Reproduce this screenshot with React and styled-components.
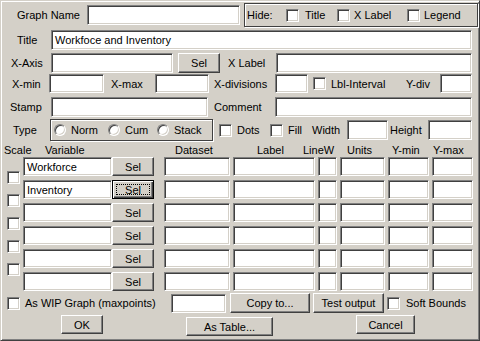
import React from 'react';
import styled, { createGlobalStyle } from 'styled-components';

const GlobalStyle = createGlobalStyle`
    html, body {
        margin: 0;
        padding: 0;
        background: #d4d0c8;
    }
`;

const Window = styled.div`
    width: 480px;
    height: 341px;
    box-sizing: border-box;
    background: #d4d0c8;
    border: 1px solid;
    border-color: #d4d0c8 #404040 #404040 #d4d0c8;
    box-shadow: inset 1px 1px #fff, inset -1px -1px #808080;
    font-family: "Liberation Sans", Arial, sans-serif;
    font-size: 11px;
    color: #000;
    display: flex;
    flex-direction: column;
    overflow: hidden;
`;

const Row = styled.div`
    display: flex;
    align-items: ${(p) => p.$align || 'center'};
    height: ${(p) => p.$h}px;
    margin-top: ${(p) => p.$mt || 0}px;
    flex-shrink: 0;
`;

const Text = styled.span`
    margin-left: ${(p) => p.$ml || 0}px;
    width: ${(p) => (p.$w ? `${p.$w}px` : 'auto')};
    flex-shrink: 0;
    white-space: nowrap;
`;

const Field = styled.div`
    box-sizing: border-box;
    width: ${(p) => p.$w}px;
    height: ${(p) => p.$h || 20}px;
    margin-left: ${(p) => p.$ml || 0}px;
    flex-shrink: 0;
    background: #fff;
    border: 1px solid;
    border-color: #808080 #fff #fff #808080;
    box-shadow: inset 1px 1px #404040, inset -1px -1px #d4d0c8;
    padding-left: 3px;
    display: flex;
    align-items: center;
    white-space: nowrap;
    overflow: hidden;
`;

const Button = styled.div`
    box-sizing: border-box;
    width: ${(p) => p.$w}px;
    height: ${(p) => p.$h || 20}px;
    margin-left: ${(p) => p.$ml || 0}px;
    margin-top: ${(p) => p.$mt || 0}px;
    flex-shrink: 0;
    background: #d4d0c8;
    border: 1px solid;
    border-color: ${(p) => (p.$default ? '#000' : '#fff #404040 #404040 #fff')};
    box-shadow: ${(p) =>
        p.$default
            ? 'inset 1px 1px #fff, inset -1px -1px #404040, inset -2px -2px #808080'
            : 'inset -1px -1px #808080'};
    padding: ${(p) => (p.$default ? '3px' : '0')};
    display: flex;
    align-items: center;
    justify-content: center;
    white-space: nowrap;
`;

const Focus = styled.span`
    flex: 1;
    align-self: stretch;
    border: 1px dotted #000;
    display: flex;
    align-items: center;
    justify-content: center;
`;

const Check = styled.span`
    box-sizing: border-box;
    width: 13px;
    height: 13px;
    flex-shrink: 0;
    background: #fff;
    border: 1px solid;
    border-color: #808080 #fff #fff #808080;
    box-shadow: inset 1px 1px #404040, inset -1px -1px #d4d0c8;
`;

const Radio = styled.span`
    box-sizing: border-box;
    width: 12px;
    height: 12px;
    flex-shrink: 0;
    border-radius: 50%;
    background: #fff;
    border: 1px solid;
    border-color: #808080 #fff #fff #808080;
    box-shadow: inset 1px 1px #404040, inset -1px -1px #d4d0c8;
`;

const Option = styled.label`
    display: flex;
    align-items: center;
    gap: ${(p) => p.$gap || 5}px;
    margin-left: ${(p) => p.$ml || 0}px;
    width: ${(p) => (p.$w ? `${p.$w}px` : 'auto')};
    flex-shrink: 0;
    white-space: nowrap;
`;

const Group = styled.div`
    box-sizing: border-box;
    display: flex;
    align-items: center;
    width: ${(p) => p.$w}px;
    height: ${(p) => p.$h}px;
    margin-left: ${(p) => p.$ml || 0}px;
    padding-left: ${(p) => p.$pl || 2}px;
    flex-shrink: 0;
    border: 1px solid #404040;
    box-shadow: 1px 1px 0 #fff, inset 1px 1px 0 #fff;
`;

const Grid = styled.div`
    display: flex;
    margin-top: 1px;
    flex-shrink: 0;
`;

const ScaleCol = styled.div`
    display: flex;
    flex-direction: column;
    gap: 10px;
    margin-left: 6px;
    padding-top: 14px;
`;

const RowsCol = styled.div`
    display: flex;
    flex-direction: column;
    gap: 4px;
    margin-left: 3px;
`;

const DataRow = styled.div`
    display: flex;
    height: 19px;
`;

const variables = ['Workforce', 'Inventory', '', '', '', ''];
const cells = [
    { w: 66, ml: 10 },
    { w: 82, ml: 3 },
    { w: 19, ml: 3 },
    { w: 45, ml: 3 },
    { w: 41, ml: 3 },
    { w: 41, ml: 3 },
];
const headers = [
    ['Scale', 41, 3],
    ['Variable', 130],
    ['Dataset', 82],
    ['Label', 46],
    ['LineW', 44],
    ['Units', 45],
    ['Y-min', 41],
    ['Y-max'],
];

export default function App() {
    return (
        <Window>
            <GlobalStyle />
            <Row $h={24} $mt={2}>
                <Text $ml={16} $w={70}>Graph Name</Text>
                <Field $w={153} />
                <Group $ml={4} $w={234} $h={24}>
                    <Text $w={39}>Hide:</Text>
                    <Option $w={51} $gap={6}><Check />Title</Option>
                    <Option $w={70} $gap={4}><Check />X Label</Option>
                    <Option $gap={4}><Check />Legend</Option>
                </Group>
            </Row>

            <Row $h={20} $mt={3}>
                <Text $ml={16} $w={34}>Title</Text>
                <Field $w={421}>Workfoce and Inventory</Field>
            </Row>

            <Row $h={20} $mt={3}>
                <Text $ml={10} $w={40}>X-Axis</Text>
                <Field $w={122} />
                <Button $ml={5} $w={42}>Sel</Button>
                <Text $ml={8} $w={48}>X Label</Text>
                <Field $w={196} />
            </Row>

            <Row $h={19} $mt={1}>
                <Text $ml={11} $w={37}>X-min</Text>
                <Field $w={55} $h={19} />
                <Text $ml={7} $w={44}>X-max</Text>
                <Field $w={54} $h={19} />
                <Text $ml={5} $w={61}>X-divisions</Text>
                <Field $w={33} $h={19} />
                <Option $ml={5} $w={93}><Check />Lbl-Interval</Option>
                <Text $w={34}>Y-div</Text>
                <Field $w={32} $h={19} />
            </Row>

            <Row $h={20} $mt={4}>
                <Text $ml={9} $w={41}>Stamp</Text>
                <Field $w={157} />
                <Text $ml={6} $w={61}>Comment</Text>
                <Field $w={197} />
            </Row>

            <Row $h={22} $mt={2}>
                <Text $ml={12} $w={37}>Type</Text>
                <Group $w={163} $h={22} $pl={3}>
                    <Option $w={54}><Radio />Norm</Option>
                    <Option $w={49}><Radio />Cum</Option>
                    <Option><Radio />Stack</Option>
                </Group>
                <Option $ml={6} $w={51}><Check />Dots</Option>
                <Option $w={42}><Check />Fill</Option>
                <Text $w={35}>Width</Text>
                <Field $w={41} />
                <Text $ml={2} $w={38}>Height</Text>
                <Field $w={44} />
            </Row>

            <Row $h={13} $mt={2}>
                {headers.map(([label, w, ml]) => (
                    <Text key={label} $w={w} $ml={ml}>{label}</Text>
                ))}
            </Row>

            <Grid>
                <ScaleCol>
                    {[0, 1, 2, 3, 4].map((i) => (
                        <Check key={i} />
                    ))}
                </ScaleCol>
                <RowsCol>
                    {variables.map((name, i) => (
                        <DataRow key={i}>
                            <Field $w={89} $h={19}>{name}</Field>
                            <Button $w={42} $h={19} $default={i === 1}>
                                {i === 1 ? <Focus>Sel</Focus> : 'Sel'}
                            </Button>
                            {cells.map((c, j) => (
                                <Field key={j} $w={c.w} $ml={c.ml} $h={19} />
                            ))}
                        </DataRow>
                    ))}
                </RowsCol>
            </Grid>

            <Row $h={20} $mt={2}>
                <Option $ml={6} $w={164}><Check />As WIP Graph (maxpoints)</Option>
                <Field $w={55} $h={19} />
                <Button $ml={4} $w={80}>Copy to...</Button>
                <Button $ml={3} $w={71}>Test output</Button>
                <Option $ml={3} $gap={6}><Check />Soft Bounds</Option>
            </Row>

            <Row $h={21} $mt={2} $align="flex-start">
                <Button $ml={60} $w={42} $h={19}>OK</Button>
                <Button $ml={83} $w={87} $h={19} $mt={2}>As Table...</Button>
                <Button $ml={83} $w={59} $h={19}>Cancel</Button>
            </Row>
        </Window>
    );
}
